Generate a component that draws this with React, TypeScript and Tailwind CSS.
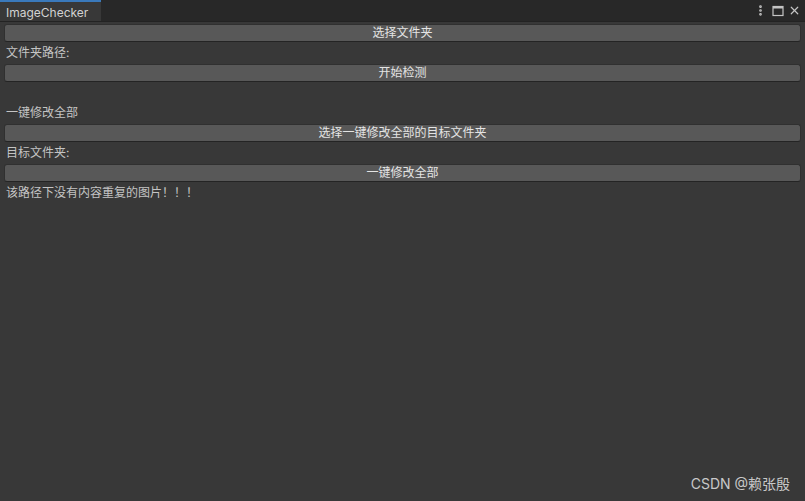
import { MoreVertical, X } from 'lucide-react'

const font = { fontFamily: '"Inter", "Noto Sans CJK SC", sans-serif' }

const Button = ({ label }: { label: string }) => (
  <button className="mx-[4px] h-[18px] rounded-[3px] bg-[#585858] border border-[#303030] border-b-[#242424] text-[12px] leading-[16px] text-[#e4e4e4] text-center">
    {label}
  </button>
)

const Label = ({ text }: { text: string }) => (
  <div className="h-[18px] px-[6px] text-[12px] leading-[18px] text-[#c4c4c4]">{text}</div>
)

const App = () => {
  return (
    <div className="w-[805px] h-[501px] bg-[#383838] flex flex-col relative overflow-hidden" style={font}>
      {/* Window tab strip */}
      <div className="h-[22px] bg-[#282828] border-b border-[#232323] flex items-stretch">
        <div className="w-[101px] bg-[#383838] border-t-2 border-[#3a79bb] pl-[6px] pt-[2px] text-[12px] leading-[17px] text-[#d2d2d2]">
          ImageChecker
        </div>
        <div className="flex-1" />
        <div className="flex items-center gap-[4px] pr-[4px] text-[#c4c4c4]">
          <MoreVertical className="w-[13px] h-[13px]" strokeWidth={3} />
          <svg width="12" height="12" viewBox="0 0 12 12" className="ml-[1px]">
            <rect x="1" y="1.5" width="10" height="9" fill="none" stroke="#c4c4c4" strokeWidth="1.2" />
            <rect x="1" y="1.5" width="10" height="2" fill="#c4c4c4" />
          </svg>
          <X className="w-[13px] h-[13px]" strokeWidth={2.2} />
        </div>
      </div>

      <div className="flex flex-col gap-[2px] pt-[2px]">
        <Button label="选择文件夹" />
        <Label text="文件夹路径:" />
        <Button label="开始检测" />
        <div className="h-[18px]" />
        <Label text="一键修改全部" />
        <Button label="选择一键修改全部的目标文件夹" />
        <Label text="目标文件夹:" />
        <Button label="一键修改全部" />
        <Label text="该路径下没有内容重复的图片！！！" />
      </div>

      <div className="absolute right-[15px] bottom-[7px] text-[14px] text-[#c8c8c8]">CSDN @赖张殷</div>
    </div>
  )
}

export default App
